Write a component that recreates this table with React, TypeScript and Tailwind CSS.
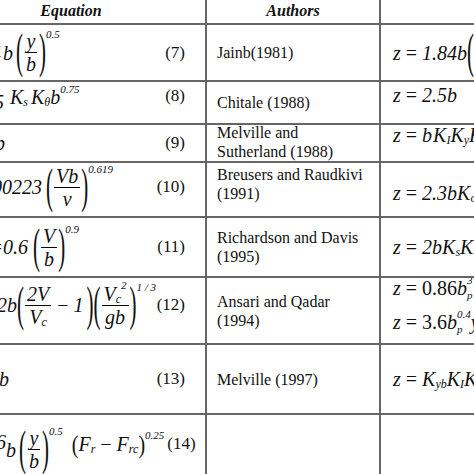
import type { ReactNode } from "react";

const serif = "font-['Liberation_Serif','Times_New_Roman',serif]";

// zero-width box: its text hangs out past the cropped left edge
function Pre({ children }: { children: ReactNode }) {
  return (
    <span className="flex w-0 shrink-0 justify-end">
      <span className="flex shrink-0 items-center whitespace-nowrap">{children}</span>
    </span>
  );
}

const Eq = () => <span className="mx-[5px] not-italic">=</span>;
const Minus = () => <span className="mx-[5px] not-italic">−</span>;

function Frac({ n, d }: { n: ReactNode; d: ReactNode }) {
  return (
    <span className="mx-[1px] inline-flex flex-col items-center">
      <span className="flex items-center border-b border-black px-[2px] leading-[22px]">{n}</span>
      <span className="flex items-center px-[2px] leading-[22px]">{d}</span>
    </span>
  );
}

function Paren({ c, small }: { c: string; small?: boolean }) {
  return (
    <span
      className={
        small
          ? "inline-block scale-y-[1.25] not-italic leading-none"
          : "inline-block scale-y-[2.3] text-[21px] not-italic leading-none"
      }
    >
      {c}
    </span>
  );
}

function Sub({ children }: { children: ReactNode }) {
  return <span className="inline-block translate-y-[5px] text-[12px] leading-none">{children}</span>;
}

function Sup({ children, top }: { children: ReactNode; top?: boolean }) {
  return (
    <span
      className={
        top
          ? "self-start -mt-[1px] text-[11px] leading-none"
          : "inline-block -translate-y-[8px] text-[11px] leading-none"
      }
    >
      {children}
    </span>
  );
}

function Num({ children }: { children: ReactNode }) {
  return <span className="ml-auto text-[17px] not-italic">{children}</span>;
}

const cell = "bg-white";
const eqCell = `${cell} flex items-center pr-[20px] text-[20px] italic whitespace-nowrap`;
const txtCell = `${cell} flex items-center pl-[10px] text-[16px] leading-[19px]`;
const rCell = `${cell} flex items-center pl-[12px] text-[20px] italic whitespace-nowrap overflow-hidden`;

export default function App() {
  return (
    <div className={`h-[474px] w-[474px] overflow-hidden bg-white text-[#111] ${serif}`}>
      <div className="grid h-[474px] grid-cols-[205px_172px_1fr] grid-rows-[23px_55px_41px_36px_53px_58px_65px_68px_59px] gap-[2px] bg-[#666]">
        {/* header */}
        <div className={`${cell} flex items-center justify-center pb-[2px] pr-[63px] text-[16px] font-bold italic`}>
          Equation
        </div>
        <div className={`${cell} flex items-center justify-center pb-[2px] text-[16px] font-bold italic`}>
          Authors
        </div>
        <div className={cell} />

        {/* (7) */}
        <div className={`${eqCell} pl-[1px]`}>
          <Pre>
            z<Eq />1.84
          </Pre>
          <span className="ml-[2px] flex items-center">
            b<span className="w-[3px]" />
            <Paren c="(" />
            <Frac n="y" d="b" />
            <Paren c=")" />
            <Sup top>0.5</Sup>
          </span>
          <Num>(7)</Num>
        </div>
        <div className={txtCell}>Jainb(1981)</div>
        <div className={rCell}>
          z<Eq />1.84b<span className="w-[4px]" />
          <Paren c="(" />
          <Frac n="y" d="b" />
        </div>

        {/* (8) */}
        <div className={`${eqCell} items-start pl-[4px] pt-[5px]`}>
          <Pre>
            z<Eq />2.5
          </Pre>
          <span className="ml-[6px] flex items-center leading-[20px]">
            K<Sub>s</Sub>
            <span className="w-[3px]" />
            K<Sub>θ</Sub>b<Sup>0.75</Sup>
          </span>
          <span className="ml-auto text-[17px] not-italic leading-[18px]">(8)</span>
        </div>
        <div className={txtCell}>Chitale (1988)</div>
        <div className={`${rCell} items-start pt-[3px]`}>
          <span className="leading-[20px]">
            z<Eq />2.5b
          </span>
        </div>

        {/* (9) */}
        <div className={`${eqCell} pl-[5px]`}>
          <Pre>
            z<Eq />b
          </Pre>
          <Num>(9)</Num>
        </div>
        <div className={`${txtCell} pb-[2px]`}>
          Melville and
          <br />
          Sutherland (1988)
        </div>
        <div className={`${rCell} items-start pt-[0px]`}>
          <span className="flex items-center leading-[20px]">
            z<Eq />b<span className="w-[1px]" />K<Sub>I</Sub>K<Sub>y</Sub>K<Sub>d</Sub>
          </span>
        </div>

        {/* (10) */}
        <div className={`${eqCell} pb-[5px] pl-[2px]`}>
          <Pre>
            z<Eq />0.0
          </Pre>
          <span className="flex items-center">
            0223<span className="w-[4px]" />
            <Paren c="(" />
            <Frac n="Vb" d="ν" />
            <Paren c=")" />
            <Sup top>0.619</Sup>
          </span>
          <Num>(10)</Num>
        </div>
        <div className={`${txtCell} pb-[12px]`}>
          Breusers and Raudkivi
          <br />
          (1991)
        </div>
        <div className={`${rCell} pt-[6px]`}>
          z<Eq />2.3b<span className="w-[1px]" />K<Sub>σ</Sub>K<Sub>d</Sub>
        </div>

        {/* (11) */}
        <div className={`${eqCell} pl-[2px]`}>
          <Pre>
            z <span className="not-italic">=</span>
          </Pre>
          <span className="ml-[1px] flex items-center">
            0.6<span className="w-[5px]" />
            <Paren c="(" />
            <Frac n="V" d="b" />
            <Paren c=")" />
            <Sup top>0.9</Sup>
          </span>
          <Num>(11)</Num>
        </div>
        <div className={txtCell}>
          Richardson and Davis
          <br />
          (1995)
        </div>
        <div className={rCell}>
          z<Eq />2b<span className="w-[5px]" />K<Sub>s</Sub>K<Sub>θ</Sub>
        </div>

        {/* (12) */}
        <div className={`${eqCell} pb-[11px] pl-[7px]`}>
          <Pre>
            z<Eq />1.2
          </Pre>
          <span className="flex items-center">
            b
            <Paren c="(" />
            <Frac
              n="2V"
              d={
                <>
                  V<Sub>c</Sub>
                </>
              }
            />
            <Minus />
            <span className="mr-[3px]">1</span>
            <Paren c=")" />
            <Paren c="(" />
            <Frac
              n={
                <>
                  V<Sub>c</Sub>
                  <Sup>2</Sup>
                </>
              }
              d="gb"
            />
            <Paren c=")" />
            <Sup top>1 / 3</Sup>
          </span>
          <Num>(12)</Num>
        </div>
        <div className={txtCell}>
          Ansari and Qadar
          <br />
          (1994)
        </div>
        <div className={`${cell} flex flex-col items-start gap-[14px] pl-[12px] text-[20px] whitespace-nowrap overflow-hidden`}>
          <span className="flex items-center leading-[20px]">
            <i>z</i>
            <Eq />
            0.86<i>b</i>
            <span className="inline-flex flex-col text-[11px] italic leading-[10px]">
              <span className="-translate-y-[3px]">3</span>
              <span className="translate-y-[2px]">p</span>
            </span>
          </span>
          <span className="flex items-center leading-[20px]">
            <i>z</i>
            <Eq />
            3.6<i>b</i>
            <span className="inline-flex flex-col text-[11px] italic leading-[10px]">
              <span className="-translate-y-[3px]">0.4</span>
              <span className="translate-y-[2px]">p</span>
            </span>
            <i>y</i>
          </span>
        </div>

        {/* (13) */}
        <div className={`${eqCell} pl-[9px]`}>
          <Pre>
            z<Eq />2.4b
          </Pre>
          <Num>(13)</Num>
        </div>
        <div className={txtCell}>Melville (1997)</div>
        <div className={rCell}>
          z<Eq />K<Sub>yb</Sub>K<Sub>I</Sub>K<Sub>d</Sub>
        </div>

        {/* (14) */}
        <div className={`${cell} flex items-start pl-[6px] pt-[12px] text-[20px] italic whitespace-nowrap`}>
          <Pre>
            z<Eq />1.06
          </Pre>
          <span className="flex items-center">
            b<span className="w-[3px]" />
            <Paren c="(" />
            <Frac n="y" d="b" />
            <Paren c=")" />
            <Sup top>0.5</Sup>
            <span className="ml-[9px] flex -translate-y-[6px] items-center">
              <Paren c="(" small />
              F<Sub>r</Sub>
              <Minus />F<Sub>rc</Sub>
              <Paren c=")" small />
              <Sup>0.25</Sup>
              <span className="ml-[3px] text-[17px] not-italic">(14)</span>
            </span>
          </span>
        </div>
        <div className={cell} />
        <div className={cell} />
      </div>
    </div>
  );
}
